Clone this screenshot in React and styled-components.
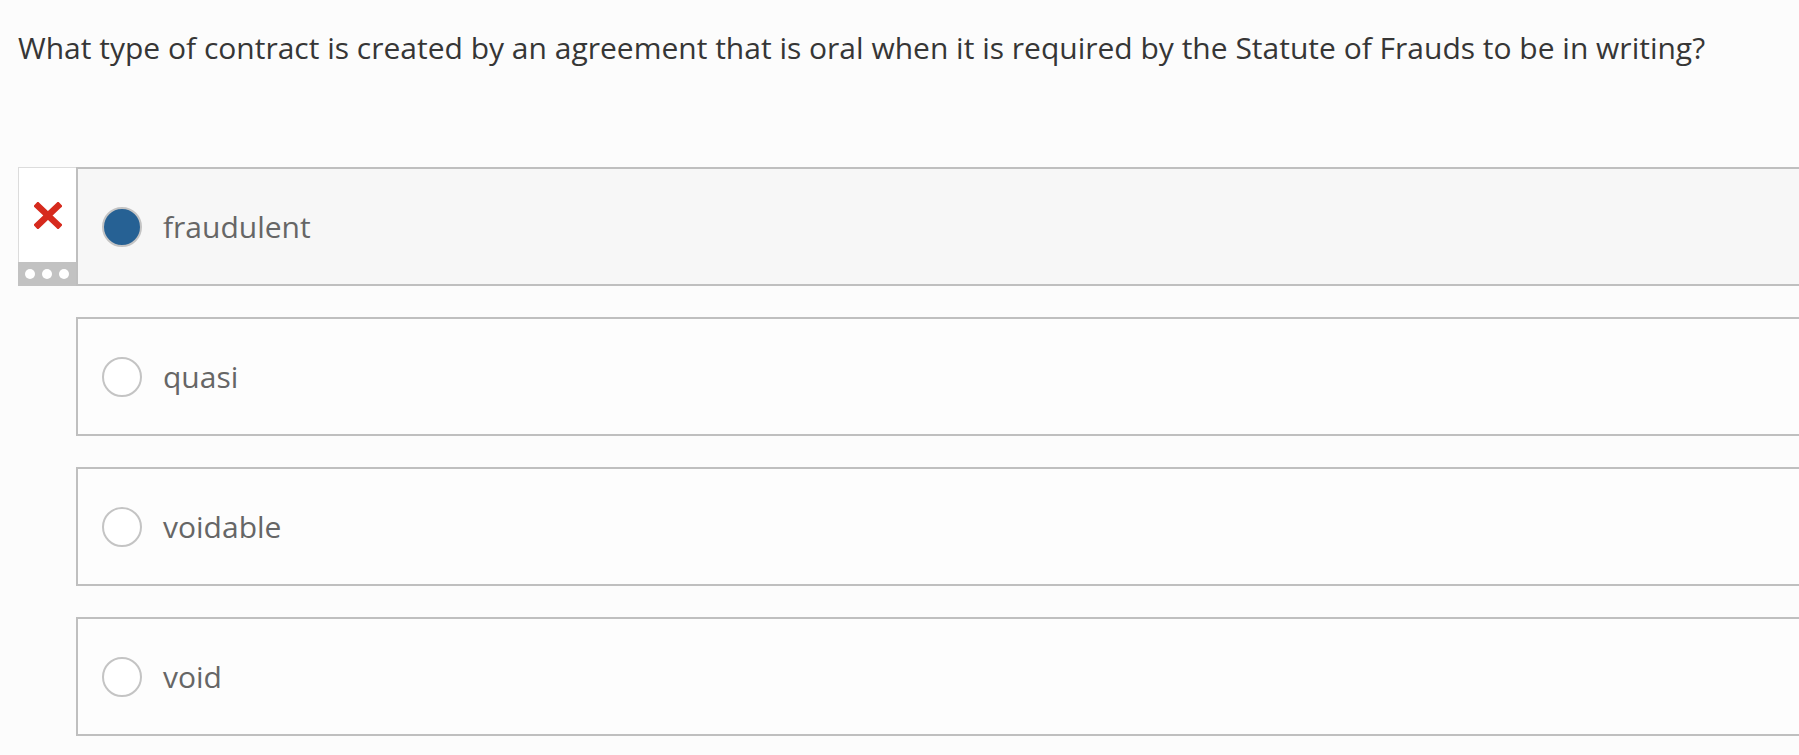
import React from 'react'
import styled, { createGlobalStyle } from 'styled-components';

const GlobalStyle = createGlobalStyle`
    html, body {
        margin: 0;
        padding: 0;
        background-color: #fcfcfc;
        overflow: hidden;
    }
    body {
        font-family: "Open Sans", "Liberation Sans", sans-serif;
    }
`;

const Page = styled.div`
    width: 100%;
    min-height: 755px;
    padding-left: 18px;
    box-sizing: border-box;
`;

const Question = styled.p`
    margin: 0;
    padding-top: 27px;
    height: 41px;

    font-size: 30px;
    line-height: 41px;
    color: #363636;
    white-space: nowrap;
`;

const OptionList = styled.div`
    margin-top: 99px;

    display: flex;
    flex-direction: column;
    gap: 31px;
`;

const OptionRow = styled.div`
    display: flex;
    flex-direction: row;
`;

const Gutter = styled.div`
    width: 58px;
    flex-shrink: 0;
`;

const FeedbackPanel = styled.div`
    width: 58px;
    height: 119px;
    flex-shrink: 0;
    box-sizing: border-box;

    display: flex;
    flex-direction: column;

    background-color: #ffffff;
    border: 1px solid #dcdcdc;
    border-right: none;
`;

const MarkArea = styled.div`
    flex: 1;

    display: flex;
    align-items: center;
    justify-content: center;
`;

const DotsBar = styled.div`
    height: 24px;
    margin: 0 0 -1px -1px;

    display: flex;
    align-items: center;
    justify-content: center;
    gap: 7px;

    background-color: #c2c2c2;

    & > span {
        width: 10px;
        height: 10px;
        border-radius: 50%;
        background-color: #ffffff;
    }
`;

const OptionBox = styled.label`
    flex: 1;
    height: 119px;
    box-sizing: border-box;
    padding-left: 24px;

    display: flex;
    align-items: center;
    gap: 21px;

    background-color: ${(props) => (props.$selected ? '#f7f7f7' : '#fdfdfd')};
    border: 2px solid #bfbfbf;
    border-right: none;
`;

const Radio = styled.span`
    width: 40px;
    height: 40px;
    box-sizing: border-box;
    flex-shrink: 0;

    border-radius: 50%;
    border: 2px solid #c4c4c4;
    background-color: ${(props) => (props.$selected ? '#266194' : '#ffffff')};
`;

const OptionText = styled.span`
    font-size: 30px;
    color: #666666;
`;

const WrongMark = () => (
    <svg width="28" height="27" viewBox="0 0 28 27">
        <path d="M4 4 L24 23 M24 4 L4 23" stroke="#d62a1d" strokeWidth="6.5" strokeLinecap="square" />
    </svg>
);

const options = [
    { label: 'fraudulent', selected: true, wrong: true },
    { label: 'quasi' },
    { label: 'voidable' },
    { label: 'void' },
];

export default function App() {
    return (
        <>
            <GlobalStyle />
            <Page>
                <Question>
                    What type of contract is created by an agreement that is oral when it is required by the Statute of Frauds to be in writing?
                </Question>

                <OptionList>
                    {options.map((opt) => (
                        <OptionRow key={opt.label}>
                            {opt.wrong ? (
                                <FeedbackPanel>
                                    <MarkArea>
                                        <WrongMark />
                                    </MarkArea>
                                    <DotsBar>
                                        <span />
                                        <span />
                                        <span />
                                    </DotsBar>
                                </FeedbackPanel>
                            ) : (
                                <Gutter />
                            )}
                            <OptionBox $selected={opt.selected}>
                                <Radio $selected={opt.selected} />
                                <OptionText>{opt.label}</OptionText>
                            </OptionBox>
                        </OptionRow>
                    ))}
                </OptionList>
            </Page>
        </>
    );
}
